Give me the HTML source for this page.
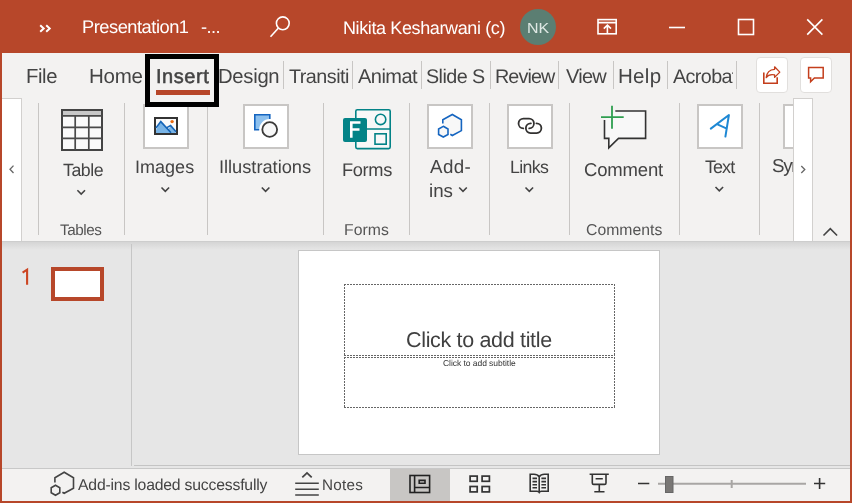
<!DOCTYPE html>
<html><head><meta charset="utf-8">
<style>
*{margin:0;padding:0;box-sizing:border-box}
html,body{width:852px;height:503px;overflow:hidden;background:#B7472A}
body{position:relative;font-family:"Liberation Sans",sans-serif}
.a{position:absolute}
.t{position:absolute;white-space:nowrap;line-height:1;will-change:transform;text-rendering:geometricPrecision}
svg{position:absolute;overflow:visible}
.tb{color:#fff}
.tab{color:#444;font-size:19px}
.sep{position:absolute;width:1px;background:#c8c6c4}
.lbl{color:#444;font-size:18px}
.grp{color:#555;font-size:15px}
.btn{position:absolute;background:#fff;border:2px solid #c8c6c4}
</style></head><body>

<!-- TITLE BAR -->
<svg style="left:0;top:0" width="852" height="53">
  <g fill="none" stroke="#fff" stroke-width="2">
    <path d="M40.2 25.3 L43.7 28.5 L40.2 31.7 M46.2 25.3 L49.7 28.5 L46.2 31.7"/>
  </g>
  <g fill="none" stroke="#fff" stroke-width="1.6">
    <circle cx="282.8" cy="23.3" r="6.4"/>
    <path d="M278.2 28.2 L270.5 36.8"/>
    <rect x="598" y="19.6" width="18.2" height="14.2"/>
    <path d="M598 22.6 H616 M607.4 25.5 V34 M603.8 28.6 L607.4 25.2 L611 28.6"/>
    <path d="M669 27.5 H685"/>
    <rect x="738.5" y="19.5" width="15" height="15"/>
    <path d="M807.2 19.4 L822.4 34.6 M822.4 19.4 L807.2 34.6"/>
  </g>
  <circle cx="538" cy="27" r="18" fill="#5b7e72"/>
</svg>
<div class="t tb" style="left:81.5px;top:18px;font-size:18.25px;letter-spacing:-0.47px">Presentation1</div>
<div class="t tb" style="left:200.6px;top:18px;font-size:18.25px;letter-spacing:-0.6px">-...</div>
<div class="t tb" style="left:343.0px;top:19px;font-size:18.0px;letter-spacing:-0.38px">Nikita Kesharwani (c)</div>
<div class="t" style="left:526.8px;top:21.5px;font-size:14.5px;color:#dfe8e4;letter-spacing:0px;transform:scaleX(1.1);transform-origin:0 0">NK</div>

<!-- RIBBON -->
<div class="a" style="left:2px;top:53px;width:848px;height:188px;background:#F3F2F1"></div>

<!-- tabs -->
<div class="t tab" style="left:26px;top:67px;font-size:20.25px;letter-spacing:-0.39px">File</div>
<div class="t tab" style="left:89px;top:67px;font-size:20.5px;letter-spacing:-0.26px">Home</div>
<div class="t tab" style="left:156.25px;top:67px;font-size:20.0px;letter-spacing:0.55px;-webkit-text-stroke:0.55px #444">Insert</div>
<div class="t tab" style="left:218px;top:67px;font-size:20.25px;letter-spacing:-0.28px">Design</div>
<div class="t tab" style="left:288.75px;top:68px;font-size:19.75px;letter-spacing:-0.52px">Transiti</div>
<div class="t tab" style="left:357.5px;top:67px;width:59.50px;overflow:hidden;font-size:20.0px;letter-spacing:-0.54px">Animat</div>
<div class="t tab" style="left:426.0px;top:68px;font-size:19.75px;letter-spacing:-0.55px">Slide S</div>
<div class="t tab" style="left:494.75px;top:68px;font-size:19.75px;letter-spacing:-0.89px">Review</div>
<div class="t tab" style="left:565.75px;top:67px;font-size:20.0px;letter-spacing:-0.77px">View</div>
<div class="t tab" style="left:618px;top:67px;font-size:20.5px;letter-spacing:0.3px">Help</div>
<div class="t tab" style="left:672.5px;top:68px;width:59.50px;overflow:hidden;font-size:19.75px;letter-spacing:-0.62px">Acrobat</div>
<div class="sep" style="left:283px;top:61px;height:28px"></div>
<div class="sep" style="left:352px;top:61px;height:28px"></div>
<div class="sep" style="left:421px;top:61px;height:28px"></div>
<div class="sep" style="left:490px;top:61px;height:28px"></div>
<div class="sep" style="left:558px;top:61px;height:28px"></div>
<div class="sep" style="left:613px;top:61px;height:28px"></div>
<div class="sep" style="left:667px;top:61px;height:28px"></div>
<div class="sep" style="left:736px;top:61px;height:28px"></div>
<div class="a" style="left:156px;top:90px;width:54px;height:5px;background:#B7472A"></div>

<!-- share/comment buttons -->
<div class="a" style="left:756px;top:57px;width:32px;height:36px;background:#fff;border:1px solid #e1dfdd;border-radius:4px"></div>
<div class="a" style="left:800px;top:57px;width:32px;height:36px;background:#fff;border:1px solid #e1dfdd;border-radius:4px"></div>
<svg style="left:0;top:0" width="852" height="100">
  <g fill="none" stroke="#C43E1C" stroke-width="1.6">
    <path d="M763.8 72.5 V83.3 H777.2 V77.2"/>
    <path d="M766.2 77.6 C766.8 72 770 69.5 774.6 69.3 V66.8 L779.8 72.1 L774.6 77.4 V74.8 C771 74.1 768 74.8 766.2 77.6 Z" stroke-width="1.3" stroke-linejoin="round"/>
    <path d="M808.6 67.6 H823.2 V78 H814.4 L810.6 81.8 V78 H808.6 Z" stroke-width="1.5"/>
  </g>
</svg>

<!-- ribbon body -->
<div class="a" style="left:2px;top:98px;width:20px;height:144px;background:#fff;border:1px solid #d2d0ce;border-left:none"></div>
<div class="sep" style="left:38px;top:103px;height:132px"></div>
<div class="sep" style="left:124px;top:103px;height:132px"></div>
<div class="sep" style="left:207px;top:103px;height:132px"></div>
<div class="sep" style="left:323px;top:103px;height:132px"></div>
<div class="sep" style="left:409px;top:103px;height:132px"></div>
<div class="sep" style="left:489px;top:103px;height:132px"></div>
<div class="sep" style="left:569px;top:103px;height:132px"></div>
<div class="sep" style="left:679px;top:103px;height:132px"></div>
<div class="sep" style="left:759px;top:103px;height:132px"></div>

<div class="btn" style="left:143px;top:104px;width:46px;height:45px"></div>
<div class="btn" style="left:243px;top:104px;width:46px;height:45px"></div>
<div class="btn" style="left:427px;top:104px;width:46px;height:45px"></div>
<div class="btn" style="left:507px;top:104px;width:46px;height:45px"></div>
<div class="btn" style="left:697px;top:104px;width:46px;height:45px"></div>
<div class="btn" style="left:783px;top:104px;width:14px;height:45px;border-right:none"></div>

<div class="t lbl" style="left:62.5px;top:162px;font-size:17.75px;letter-spacing:-0.46px">Table</div>
<div class="t lbl" style="left:135.25px;top:158px;font-size:18.0px;letter-spacing:0.02px">Images</div>
<div class="t lbl" style="left:218.75px;top:158px;font-size:18.25px;letter-spacing:-0.02px">Illustrations</div>
<div class="t lbl" style="left:342.0px;top:161px;font-size:18.25px;letter-spacing:-0.35px">Forms</div>
<div class="t lbl" style="left:429.5px;top:158px;font-size:18.75px;letter-spacing:0.4px">Add-</div>
<div class="t lbl" style="left:429.0px;top:182px;font-size:18.75px;letter-spacing:0.0px">ins</div>
<div class="t lbl" style="left:510.25px;top:159px;font-size:17.75px;letter-spacing:-0.66px">Links</div>
<div class="t lbl" style="left:584px;top:161px;font-size:18.5px;letter-spacing:-0.16px">Comment</div>
<div class="t lbl" style="left:705.25px;top:158px;font-size:18.0px;letter-spacing:-0.96px">Text</div>
<div class="t lbl" style="left:772px;top:157px;width:21px;overflow:hidden;font-size:18.75px;letter-spacing:-1.3px">Symbols</div>
<div class="t grp" style="left:60.0px;top:223px;font-size:15.25px;letter-spacing:-0.44px">Tables</div>
<div class="t grp" style="left:343.5px;top:223px;font-size:15.75px;letter-spacing:0.04px">Forms</div>
<div class="t grp" style="left:585.75px;top:223px;letter-spacing:0.03px;font-size:15.75px">Comments</div>

<div class="a" style="left:793px;top:98px;width:20px;height:144px;background:#fff;border:1px solid #d2d0ce"></div>
<!-- black focus box -->
<div class="a" style="left:145px;top:54px;width:74px;height:53px;border:5px solid #000"></div>

<svg style="left:0;top:0" width="852" height="241">
  <!-- chevrons -->
  <g fill="none" stroke="#444" stroke-width="1.6">
    <path d="M77.4 190.3 L81.2 194.1 L85 190.3"/>
    <path d="M161.5 187.5 L165.3 191.3 L169.1 187.5"/>
    <path d="M261.8 187.5 L265.6 191.3 L269.4 187.5"/>
    <path d="M459.2 187.5 L463 191.3 L466.8 187.5"/>
    <path d="M525.5 187.5 L529.3 191.3 L533.1 187.5"/>
    <path d="M715.5 187 L719.3 190.8 L723.1 187"/>
    <path d="M13.5 165.6 L10 169.3 L13.5 173" stroke="#666" stroke-width="1.3"/>
    <path d="M801.3 166 L804.8 169.5 L801.3 173" stroke="#666" stroke-width="1.3"/>
    <path d="M823.5 235.5 L830.3 228.7 L837.1 235.5"/>
  </g>
  <!-- table icon -->
  <rect x="62" y="110" width="40" height="40" fill="#fafafa" stroke="#444" stroke-width="2"/>
  <rect x="63" y="111" width="38" height="5" fill="#c8c8c8"/>
  <path d="M62 115.8 H102 M62 127.3 H102 M62 138.4 H102 M75.2 116 V150 M88.8 116 V150" stroke="#4a4a4a" stroke-width="1.7" fill="none"/>
  <!-- images icon -->
  <rect x="155" y="118" width="22" height="16" fill="#fafafa" stroke="#333" stroke-width="2"/>
  <path d="M156 130 L160.8 121.6 L168.2 129 L170.6 126.6 L176 132.8 V133 H156 Z" fill="#79b4e6"/>
  <path d="M156 128 L160.8 121.6 L171 132.8 M166.8 127.6 L170.6 125.6 L176 131.8" fill="none" stroke="#1565b8" stroke-width="1.6"/>
  <circle cx="172.1" cy="121.6" r="1.7" fill="#e86a10"/>
  <!-- illustrations icon -->
  <path d="M254.8 114.7 H269.8 V119 A10.5 10.5 0 0 0 259.2 129.8 H254.8 Z" fill="#8cc0ee"/><path d="M259.2 129.8 H254.8 V114.7 H269.8 V119" fill="none" stroke="#1565c0" stroke-width="1.6"/>
  <circle cx="269.7" cy="129.5" r="7.4" fill="#f8f8f8" stroke="#3b3a39" stroke-width="1.8"/>
  <!-- forms icon -->
  <rect x="355.8" y="109.8" width="34.4" height="38.8" rx="1.5" fill="#f8f8f8" stroke="#038387" stroke-width="1.6"/>
  <path d="M355.8 129 H390.2" stroke="#038387" stroke-width="1.6"/>
  <circle cx="380.6" cy="119.4" r="5.2" fill="none" stroke="#038387" stroke-width="1.6"/>
  <rect x="375" y="133.8" width="11.2" height="10.4" fill="none" stroke="#038387" stroke-width="1.6"/>
  <rect x="343" y="118" width="24" height="24" rx="2" fill="#038387"/>
  <path d="M351.3 137.8 V122.5 H360.5 M351.3 129.5 H359.5" fill="none" stroke="#fff" stroke-width="2.6"/>
  <!-- add-ins icon -->
  <path d="M442.8 123.5 V119.7 L452.3 114.5 L461.4 119.7 V130.6 L452.3 135.5 L450.3 134.3" fill="#f8f8f8" stroke="#1565c0" stroke-width="1.6"/>
  <path d="M443.3 126.3 L448 129 V134.5 L443.3 137 L438.6 134.5 V129 Z" fill="#f8f8f8" stroke="#1565c0" stroke-width="1.6"/>
  <!-- links icon -->
  <g fill="none" stroke="#323130" stroke-width="1.8" stroke-linecap="round">
    <path d="M523.3 128.4 A4.9 4.9 0 0 1 523.6 118.6 H528.9 A4.9 4.9 0 0 1 529.2 128.4"/>
    <path d="M536.4 123.3 A4.9 4.9 0 0 1 536.6 133.1 H530.6 A4.9 4.9 0 0 1 530.9 123.3"/>
  </g>
  <!-- comment icon -->
  <path d="M615.3 111 H645.6 V138.4 H618.5 L608.8 147.8 V138.4 H604.5 V120" fill="#f8f8f8" stroke="#333" stroke-width="1.6"/>
  <path d="M601 117.2 H623.7 M612 105.8 V128.7" stroke="#2e9e4f" stroke-width="1.8"/>
  <!-- text icon -->
  <path d="M710.8 128.6 L728.9 115 L725.4 136.6 M718 124.6 L726.8 128.6" fill="none" stroke="#1e88d4" stroke-width="2" stroke-linecap="round" stroke-linejoin="round"/>
</svg>

<!-- SLIDE AREA -->
<div class="a" style="left:2px;top:241px;width:848px;height:228px;background:#E6E6E6"></div>
<div class="a" style="left:2px;top:241px;width:848px;height:1px;background:#cdcdcd"></div><div class="a" style="left:2px;top:242px;width:848px;height:8px;background:linear-gradient(#d5d5d5,#e6e6e6)"></div>
<svg style="left:0;top:0" width="60" height="300"><path d="M22.6 272.6 L27.1 269.6 V284.8" fill="none" stroke="#cc4522" stroke-width="2.1"/></svg>
<div class="a" style="left:51px;top:267px;width:53px;height:34px;border:4px solid #B7472A;background:#fff"></div>
<div class="a" style="left:131px;top:244px;width:1px;height:222px;background:#c6c6c6"></div>
<div class="a" style="left:134px;top:465px;width:716px;height:1px;background:#c4c4c4"></div>
<div class="a" style="left:298px;top:250px;width:362px;height:205px;background:#fff;border:1px solid #c6c6c6"></div>
<svg style="left:0;top:0" width="852" height="503">
  <g fill="none" stroke="#666" stroke-width="1" stroke-dasharray="2 1">
    <path d="M344 284.5 H615 M344 355.5 H615 M344.5 284 V356 M614.5 284 V356"/>
    <path d="M344 357.5 H615 M344 407.5 H615 M344.5 357 V408 M614.5 357 V408"/>
  </g>
</svg>
<div class="t" style="left:406.0px;top:330px;font-size:21.5px;color:#404040;letter-spacing:-0.33px">Click to add title</div>
<div class="t" style="left:443.0px;top:359px;font-size:8.5px;color:#333;letter-spacing:-0.05px">Click to add subtitle</div>

<!-- STATUS BAR -->
<div class="a" style="left:2px;top:468px;width:848px;height:1px;background:#c8c8c8"></div>
<div class="a" style="left:2px;top:469px;width:848px;height:32px;background:#F3F2F1"></div>
<div class="a" style="left:390px;top:469px;width:60px;height:32px;background:#c8c6c4"></div>
<div class="t" style="left:77.75px;top:478px;font-size:15.75px;color:#444;letter-spacing:-0.19px">Add-ins loaded successfully</div>
<div class="t" style="left:322.0px;top:478px;font-size:15.25px;color:#444;letter-spacing:0.29px">Notes</div>
<svg style="left:0;top:0" width="852" height="503">
  <g fill="none" stroke="#444" stroke-width="1.6">
    <path d="M54.9 482.4 V477.7 L64.2 472.3 L73.5 477.7 V488.2 L64.2 493.3 L62.4 492.2"/>
    <path d="M55.5 485.3 L59.8 487.8 V492.8 L55.5 495.3 L51.2 492.8 V487.8 Z"/>
    <path d="M295.2 483.2 H318.8 M295.2 489.2 H318.8 M295.2 495 H318.8"/><path d="M302.3 477.4 L307 472.9 L311.7 477.4" stroke-width="1.8"/>
  </g>
  <g fill="none" stroke="#222" stroke-width="1.6">
    <rect x="410" y="475.5" width="19.6" height="17"/>
    <path d="M414.6 475.5 V492.5 M414.6 487.5 H429.6 M419.2 480.4 H425 V483.3 H419.2 Z"/>
  </g>
  <g fill="none" stroke="#333" stroke-width="1.6">
    <rect x="470.1" y="476.1" width="7.1" height="5.2" stroke-width="1.7"/>
    <rect x="482.1" y="476.1" width="7.3" height="5.2" stroke-width="1.7"/>
    <rect x="470.1" y="486.5" width="7.1" height="5.4" stroke-width="1.7"/>
    <rect x="482.1" y="486.5" width="7.3" height="5.4" stroke-width="1.7"/>
    <path d="M539.2 476.8 Q537.5 474.3 534 474.3 H530.2 V491.2 H537 Q538.6 491.3 539.2 492.4 Q539.8 491.3 541.4 491.2 H548.2 V474.3 H544.4 Q540.9 474.3 539.2 476.8 Z M539.2 476.8 V492"/>
    <path d="M532.5 478.4 H537 M532.5 481.6 H537 M532.5 484.7 H537 M532.5 487.8 H537 M541.4 478.4 H546 M541.4 481.6 H546 M541.4 484.7 H546 M541.4 487.8 H546"/>
    <path d="M589.6 474.2 H608.8 M592.3 474.2 V483 Q592.3 484.4 593.7 484.4 H604.6 Q606 484.4 606 483 V474.2 M595.6 478.7 H602.8 M599.3 484.4 V491.8 M594.3 491.8 H604.5"/>
    <path d="M638 483.5 H649.3 M814 483.5 H825.2 M819.6 478 V489"/>
  </g>
  <path d="M658 483.8 H806" stroke="#a8a6a4" stroke-width="2"/>
  <path d="M731.7 480 V488" stroke="#a8a6a4" stroke-width="2"/>
  <rect x="665.5" y="476.5" width="7.5" height="16" fill="#797775" stroke="#666" stroke-width="1"/>
</svg>

</body></html>
